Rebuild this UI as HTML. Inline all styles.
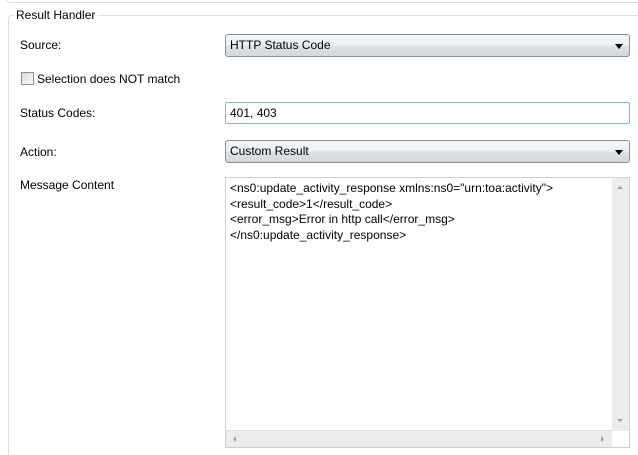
<!DOCTYPE html>
<html style="overflow:hidden;height:455px"><head><style>
body{margin:0;width:638px;height:455px;background:#fff;font-family:"Liberation Sans",sans-serif;font-size:12px;color:#000;position:relative;overflow:hidden}
.a{position:absolute}
.combo{position:absolute;left:225px;width:403px;height:21px;border:1px solid #8a8f94;border-radius:3px;background:linear-gradient(#f4f6f7 0%,#eceff1 50%,#dde2e6 51%,#d2d8dc 100%)}
.combo span{position:absolute;left:4px;top:3px}
.combo i{position:absolute;right:6px;top:9px;width:0;height:0;border-left:4px solid transparent;border-right:4px solid transparent;border-top:5px solid #000}
</style></head><body>
<div class="a" style="left:7px;top:-4px;width:640px;height:6px;border:1px solid #d5dfe5;border-top:none;border-radius:0 0 3px 3px"></div>
<div class="a" style="left:8px;top:15px;width:640px;height:445px;border:1px solid #d5dfe5;border-radius:4px"></div>
<div class="a" style="left:14px;top:8px;background:#fff;padding:0 2px;">Result Handler</div>
<div class="a" style="left:20px;top:38px">Source:</div>
<div class="combo" style="top:34px"><span>HTTP Status Code</span><i></i></div>
<div class="a" style="left:21px;top:72px;width:11px;height:11px;border:1px solid #8e8f8f;background:linear-gradient(135deg,#dcdcdc,#f8f8f8)"></div>
<div class="a" style="left:37px;top:72px">Selection does NOT match</div>
<div class="a" style="left:20px;top:106px">Status Codes:</div>
<div class="a" style="left:225px;top:102px;width:403px;height:20px;border:1px solid #7eb4ea;border-radius:2px"><span class="a" style="left:4px;top:3px">401, 403</span></div>
<div class="a" style="left:20px;top:145px">Action:</div>
<div class="combo" style="top:140px"><span>Custom Result</span><i></i></div>
<div class="a" style="left:20px;top:178px">Message Content</div>
<div class="a" style="left:225px;top:177px;width:403px;height:269px;border:1px solid #cfcfcf;line-height:15.5px">
<div class="a" style="left:4px;top:3px;white-space:pre">&lt;ns0:update_activity_response xmlns:ns0="urn:toa:activity"&gt;
&lt;result_code&gt;1&lt;/result_code&gt;
&lt;error_msg&gt;Error in http call&lt;/error_msg&gt;
&lt;/ns0:update_activity_response&gt;</div>
<div class="a" style="right:0;top:0;width:17px;height:253px;background:#ececec"></div>
<div class="a" style="left:0;bottom:0;width:386px;height:16px;background:#ececec;border-top:1px solid #e0e0e0"></div>
<div class="a" style="right:6px;top:8px;border-left:3px solid transparent;border-right:3px solid transparent;border-bottom:3px solid #a0a0a0"></div>
<div class="a" style="right:6px;top:241px;border-left:3px solid transparent;border-right:3px solid transparent;border-top:3px solid #a0a0a0"></div>
<div class="a" style="left:7px;bottom:5px;border-top:3px solid transparent;border-bottom:3px solid transparent;border-right:3px solid #a0a0a0"></div>
<div class="a" style="left:375px;bottom:5px;border-top:3px solid transparent;border-bottom:3px solid transparent;border-left:3px solid #a0a0a0"></div>
</div>
</body></html>
